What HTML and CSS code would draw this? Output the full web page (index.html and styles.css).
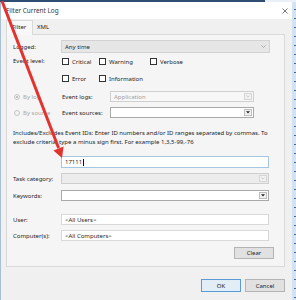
FILE: index.html
```html
<!DOCTYPE html>
<html>
<head>
<meta charset="utf-8">
<link rel="stylesheet" href="styles.css">
</head>
<body>
<div class="screen">
  <div class="topstrip"><div class="topdark"></div></div>
  <div class="main">
    <div class="dialog">
      <div class="titlebar">
        <span class="title">Filter Current Log</span>
        <svg class="close" width="6" height="6" viewBox="0 0 6 6"><path d="M0.5 0.5 L5.5 5.5 M5.5 0.5 L0.5 5.5" stroke="#555" stroke-width="0.8"/></svg>
      </div>
      <div class="client">
        <div class="tabs">
          <div class="tab active">Filter</div>
          <div class="tab">XML</div>
        </div>
        <div class="panel">
          <div class="row r-logged">
            <span class="lbl">Logged:</span>
            <div class="select">Any time<svg class="chev" width="5" height="3" viewBox="0 0 5 3"><path d="M0.3 0.3 L2.5 2.5 L4.7 0.3" fill="none" stroke="#999" stroke-width="0.7"/></svg></div>
          </div>
          <div class="row r-level">
            <span class="lbl">Event level:</span>
            <div class="levels">
              <div class="lvl-row">
                <span class="chk c1"><i class="box"></i>Critical</span>
                <span class="chk c2"><i class="box"></i>Warning</span>
                <span class="chk"><i class="box"></i>Verbose</span>
              </div>
              <div class="lvl-row">
                <span class="chk c1"><i class="box"></i>Error</span>
                <span class="chk c2"><i class="box"></i>Information</span>
              </div>
            </div>
          </div>
          <div class="row r-logs">
            <span class="radio-col"><i class="radio on"></i>By log</span>
            <span class="lbl2">Event logs:</span>
            <div class="combo disabled">Application<span class="cbtn"><svg width="4" height="3" viewBox="0 0 4 3"><path d="M0.3 0.5 L2 2.2 L3.7 0.5" fill="none" stroke="#aaa" stroke-width="0.6"/></svg></span></div>
          </div>
          <div class="row r-sources">
            <span class="radio-col"><i class="radio"></i>By source</span>
            <span class="lbl2">Event sources:</span>
            <div class="combo"><span class="cbtn"><svg width="4" height="3" viewBox="0 0 4 3"><path d="M0 0.3 L4 0.3 L2 2.6 Z" fill="#222"/></svg></span></div>
          </div>
          <p class="desc">Includes/Excludes Event IDs: Enter ID numbers and/or ID ranges separated by commas. To exclude criteria, type a minus sign first. For example 1,3,5-99,-76</p>
          <div class="row r-ids">
            <span class="lbl"></span>
            <div class="input focus">17111<span class="caret"></span></div>
          </div>
          <div class="row r-task">
            <span class="lbl">Task category:</span>
            <div class="combo full disabled"><span class="cbtn"><svg width="4" height="3" viewBox="0 0 4 3"><path d="M0.3 0.5 L2 2.2 L3.7 0.5" fill="none" stroke="#aaa" stroke-width="0.6"/></svg></span></div>
          </div>
          <div class="row r-keys">
            <span class="lbl">Keywords:</span>
            <div class="combo full"><span class="cbtn"><svg width="4" height="3" viewBox="0 0 4 3"><path d="M0 0.3 L4 0.3 L2 2.6 Z" fill="#222"/></svg></span></div>
          </div>
          <div class="row r-user">
            <span class="lbl">User:</span>
            <div class="input">&lt;All Users&gt;</div>
          </div>
          <div class="row r-comp">
            <span class="lbl">Computer(s):</span>
            <div class="input">&lt;All Computers&gt;</div>
          </div>
          <div class="row r-clear">
            <button class="btn">Clear</button>
          </div>
        </div>
        <div class="footer">
          <button class="btn ok">OK</button>
          <button class="btn">Cancel</button>
        </div>
      </div>
    </div>
    <div class="desk"></div>
  </div>
  <svg class="arrow" width="296" height="300" viewBox="0 0 296 300">
    <line x1="2" y1="1" x2="58.6" y2="148" stroke="#e2332e" stroke-width="3"/>
    <polygon points="62,158 53.4,150.6 63.6,146.6" fill="#e2332e"/>
  </svg>
</div>
</body>
</html>
```

FILE: styles.css
```css
* { box-sizing: border-box; margin: 0; padding: 0; }
html, body { width: 296px; height: 300px; overflow: hidden; }
body {
  background: #d6e5f2;
  font-family: "Noto Sans", "DejaVu Sans", sans-serif;
  font-size: 6px;
  color: #1f1f1f;
}
.screen { position: relative; width: 296px; height: 300px; display: flex; flex-direction: column; }
.topstrip { height: 2px; background: #e9f0f7; flex: none; }
.topdark { width: 265px; height: 2px; background: #2f4c72; }
.main { flex: 1; display: flex; min-height: 0; }
.dialog {
  width: 292px;
  border-left: 1px solid #a9bfd4;
  display: flex;
  flex-direction: column;
  background: #f0f0f0;
}
.desk {
  flex: 1;
  background-color: #d3e3f1;
  background-image: radial-gradient(circle, #4a6a92 0.7px, transparent 1.1px);
  background-size: 4px 9px;
  background-position: 1px 3px;
}
.titlebar {
  height: 17px;
  flex: none;
  background: #fff;
  display: flex;
  align-items: center;
  justify-content: space-between;
  padding: 0 4px 0 5px;
}
.title { font-size: 6.4px; color: #333; }
.close { display: block; }
.client { flex: 1; padding: 0 7px 0 5px; display: flex; flex-direction: column; }
.tabs { height: 16px; display: flex; align-items: flex-end; margin-bottom: -1px; flex: none; }
.tab { height: 14px; line-height: 13px; padding: 0 4px; color: #222; }
.active {
  position: relative;
  height: 15px;
  width: 27px;
  padding: 0 0 0 5px;
  background: #f8f8f8;
  border: 1px solid #d9d9d9;
  border-bottom: none;
}
.panel {
  height: 233px;
  flex: none;
  border: 1px solid #d9d9d9;
  background: #f5f5f5;
  padding-left: 6px;
}
.row { display: flex; align-items: center; }
.lbl { width: 48px; flex: none; }
.r-logged { margin-top: 5px; height: 13px; }
.select {
  width: 209px;
  height: 13px;
  background: #e6e6e6;
  border: 1px solid #d2d2d2;
  padding-left: 3px;
  display: flex;
  align-items: center;
  justify-content: space-between;
  padding-right: 3px;
}
.r-level { margin-top: 3px; align-items: flex-start; }
.r-level .lbl { line-height: 11px; }
.levels { display: flex; flex-direction: column; gap: 6px; }
.lvl-row { display: flex; height: 11px; align-items: center; }
.chk { display: flex; align-items: center; }
.c1 { width: 37px; margin-left: 1px; }
.c2 { width: 51px; }
.lvl-row .chk:not(.c1):not(.c2) { margin-left: 0; }
.lvl-row .c1 + .c2 + .chk { margin-left: 0; }
.box {
  width: 7px; height: 7px;
  border: 1px solid #333;
  background: #fff;
  margin-right: 3px;
  flex: none;
}
.r-logs { margin-top: 7px; height: 11px; }
.r-sources { margin-top: 5px; height: 11px; }
.radio-col { width: 49px; flex: none; display: flex; align-items: center; color: #a8a8a8; }
.radio {
  width: 6px; height: 6px; border-radius: 50%;
  border: 1px solid #c4c4c4;
  background: #f4f4f4;
  margin: 0 3px 0 1px;
  display: flex; align-items: center; justify-content: center;
}
.radio.on::after { content: ""; width: 2px; height: 2px; border-radius: 50%; background: #b0b0b0; }
.lbl2 { width: 48px; flex: none; }
.combo {
  width: 144px;
  height: 11px;
  background: #fff;
  border: 1px solid #a9a9a9;
  display: flex;
  align-items: center;
  justify-content: space-between;
  padding: 0 1px 0 3px;
}
.combo.disabled { background: #f7f7f7; border-color: #cfcfcf; color: #a0a0a0; }
.combo.full { width: 208px; }
.r-task .combo.disabled { background: #ececec; }
.cbtn {
  margin-left: auto;
  width: 8px; height: 7px;
  border: 1px solid #bdbdbd;
  background: #f2f2f2;
  display: flex; align-items: center; justify-content: center;
}
.disabled .cbtn { border-color: #d5d5d5; }
.desc { margin-top: 11px; line-height: 9px; width: 262px; color: #222; }
.r-ids { margin-top: 9px; height: 12px; }
.input {
  width: 208px;
  height: 11px;
  background: #fff;
  border: 1px solid #d9d9d9;
  padding-left: 3px;
  display: flex;
  align-items: center;
}
.input.focus { height: 12px; border-color: #a6c7e4; }
.caret { width: 0.6px; height: 7px; background: #111; margin-left: 0.5px; }
.r-task { margin-top: 5px; height: 11px; }
.r-keys { margin-top: 6px; height: 11px; }
.r-user { margin-top: 13px; height: 11px; }
.r-comp { margin-top: 5px; height: 11px; }
.r-clear { margin-top: 6px; justify-content: flex-end; padding-right: 10px; }
.btn {
  width: 40px;
  height: 12px;
  background: #e1e1e1;
  border: 1px solid #b4b4b4;
  font-family: inherit;
  font-size: 6px;
  color: #222;
  line-height: 10px;
}
.footer { margin-top: 12px; display: flex; justify-content: flex-end; gap: 4px; }
.footer .btn { height: 13px; }
.ok { border-color: #5a9ad6; background: #e3edf6; }
.arrow { position: absolute; left: 0; top: 0; pointer-events: none; }
```
